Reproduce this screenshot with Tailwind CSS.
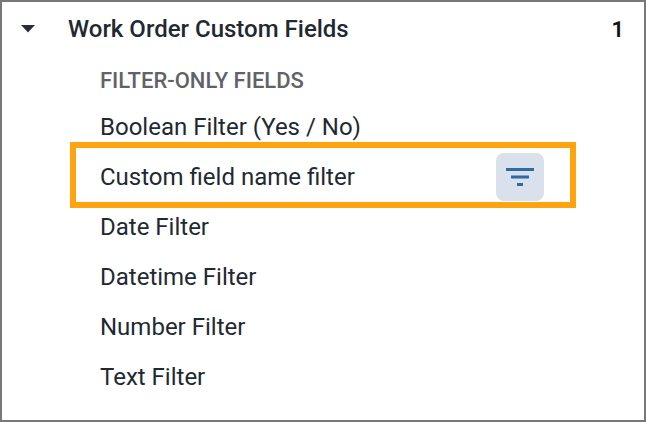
<!DOCTYPE html>
<html lang="en">
<head>
    <meta charset="UTF-8" />
    <title>Work Order Custom Fields</title>
    <script src="https://cdn.jsdelivr.net/npm/@tailwindcss/browser@4"></script>
</head>
<body class="bg-white font-['Roboto',sans-serif]">
    <div class="w-[646px] h-[422px] border-2 border-[#77777c] overflow-hidden">
        <div class="flex items-center h-[54px] pr-[20px]">
            <svg class="w-[14px] h-[8px] ml-[19px]" viewBox="0 0 14 8"><path d="M0 0h14L7 7.500z" fill="#2a2f36"/></svg>
            <span class="ml-[33px] text-[24px] font-medium text-[#1f2933]">Work Order Custom Fields</span>
            <span class="ml-auto text-[22px] font-semibold text-[#111111]">1</span>
        </div>
        <div class="flex items-center h-[46px] pt-[2px] pb-[0px] pl-[98px] text-[22px] font-medium text-[#5f6368]">FILTER-ONLY FIELDS</div>
        <div class="flex items-center h-[50px] pl-[98px] text-[24px] text-[#1f2933]">Boolean Filter (Yes / No)</div>
        <div class="relative flex items-center justify-between h-[50px] pl-[98px] pr-[100px] text-[24px] text-[#1f2933]">
            <span>Custom field name filter</span>
            <button class="flex items-center justify-center w-[48px] h-[48px] rounded-[8px] bg-[#d9e1ec]">
                <svg class="w-[28px] h-[20px]" viewBox="0 0 28 20"><path d="M0 1h28v3H0zM5 8.500h18v3H5zM11 16h6v3h-6z" fill="#2f6aa3"/></svg>
            </button>
            <div class="absolute left-[68px] top-[-10px] w-[506px] h-[66px] border-[6px] border-[#ffa40f]"></div>
        </div>
        <div class="flex items-center h-[50px] pl-[98px] text-[24px] text-[#1f2933]">Date Filter</div>
        <div class="flex items-center h-[50px] pl-[98px] text-[24px] text-[#1f2933]">Datetime Filter</div>
        <div class="flex items-center h-[50px] pl-[98px] text-[24px] text-[#1f2933]">Number Filter</div>
        <div class="flex items-center h-[50px] pl-[98px] text-[24px] text-[#1f2933]">Text Filter</div>
    </div>
</body>
</html>
